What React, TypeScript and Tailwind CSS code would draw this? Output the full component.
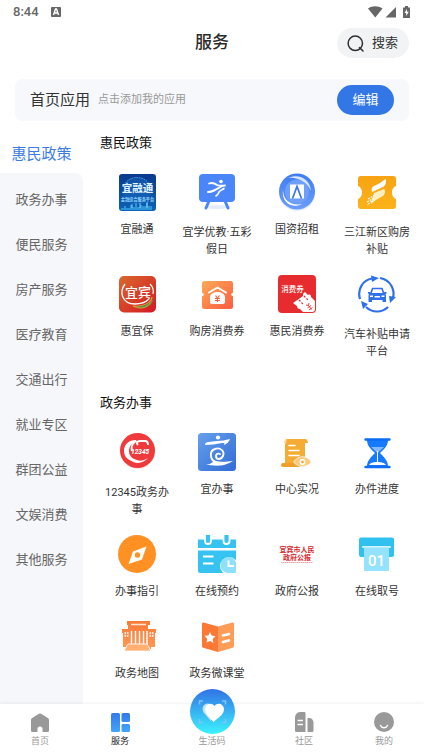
import { ReactNode, useId, useState } from 'react';
import clsx from 'clsx';

type Service = {
  name: string;
  icon: ReactNode;
  twoLines?: boolean;
};

type Section = {
  title: string;
  services: Service[];
};

type SvgProps = {
  children: ReactNode;
};

const Svg = ({ children }: SvgProps) => (
  <svg viewBox="0 0 38 38" className="w-[38px] h-[38px]" aria-hidden="true">
    {children}
  </svg>
);

type GradientProps = {
  id: string;
  from: string;
  to: string;
  diagonal?: boolean;
};

const Gradient = ({ id, from, to, diagonal }: GradientProps) => (
  <linearGradient id={id} x1="0" y1="0" x2={diagonal ? '1' : '0'} y2="1">
    <stop offset="0" stopColor={from} />
    <stop offset="1" stopColor={to} />
  </linearGradient>
);

const FinanceIcon = () => {
  const id = useId();
  return (
    <Svg>
      <Gradient id={id} from="#0a3a8c" to="#0b63b8" />
      <rect x="1" y="1" width="37" height="37" rx="3" fill={`url(#${id})`} />
      <circle cx="19" cy="18" r="14" fill="#1d6ac4" opacity=".45" />
      <path d="M6 12A15 15 0 0 1 32 12" fill="none" stroke="#5cb5ee" strokeWidth=".8" strokeDasharray="1.5 1" />
      <path d="M3 37v-2h3v-2h2v2h4v-3h2v2h3v-4h2v4h3v-2h2v1h4v-4h2v4h4v4z" fill="#3aa5e4" opacity=".75" />
      <path d="M14 35v-4M22 35v-5M29 35v-5" stroke="#9fe2ff" strokeWidth=".8" />
      <text x="19.5" y="19" textAnchor="middle" fontSize="10.5" fontWeight="700" fill="#e2f6ff">宜融通</text>
      <text x="19.5" y="27.5" textAnchor="middle" fontSize="4.2" fontWeight="700" fill="#8fd3fb">金融综合服务平台</text>
    </Svg>
  );
};

const BoardIcon = () => (
  <Svg>
    <ellipse cx="19" cy="34" rx="11" ry="2" fill="#e4edff" />
    <path d="M11 28 8 35M27 28l3 7" stroke="#4d87f5" strokeWidth="3" strokeLinecap="round" />
    <rect x="1" y="1" width="36" height="28" rx="4" fill="#4a86fa" />
    <circle cx="23" cy="8.5" r="1.8" fill="#fff" />
    <g fill="none" stroke="#fff" strokeLinecap="round" strokeLinejoin="round">
      <path d="M11 10.500c4-1.500 6 0 8 1.500 2 1 4 1 8 .5" strokeWidth="1.8" />
      <path d="M24 13c-3 2-5 3-8 4.500-2 1-4 1.500-6 1.500" strokeWidth="2" />
      <path d="M26 15.500c-2 1.500-4 2-5 3.500-.5 1.500-1 2.500-3 4" strokeWidth="1.6" />
    </g>
  </Svg>
);

const LeaseIcon = () => {
  const id = useId();
  return (
    <Svg>
      <Gradient id={id} from="#3f7cf3" to="#6b9dfb" />
      <circle cx="19" cy="20" r="18" fill="#e7effd" />
      <circle cx="19" cy="18.5" r="18" fill={`url(#${id})`} />
      <circle cx="19" cy="18.5" r="12" fill="#6fa0f8" />
      <path d="M10 5C21 0 32 6 33 18 29 9 20 4 10 5z" fill="#d5e5ff" />
      <path d="M5 17c0 11 9 16 19 14-9 5-21-1-19-14z" fill="#fff" />
      <rect x="12" y="11.5" width="14" height="14" fill="#fff" />
      <path d="M14.500 25.500 19 13.500 23.500 25.500" fill="none" stroke="#3977ee" strokeWidth="1.7" />
    </Svg>
  );
};

const SubsidyIcon = () => {
  const id = useId();
  return (
    <Svg>
      <Gradient id={id} from="#f7a313" to="#fbb31a" />
      <path
        d="M3 3h32a3 3 0 0 1 3 3v7c-3 1-4 4-4 6.500s1 5.500 4 6.500v7a3 3 0 0 1-3 3H3a3 3 0 0 1-3-3v-7c3-1 4-4 4-6.500S3 14 0 13V6a3 3 0 0 1 3-3z"
        fill={`url(#${id})`}
      />
      <path d="M28 6c0 4 0 6-3 8l-11 5c-1-3 0-5 2-6l6-3c2-1 3-3 6-4z" fill="#fff" />
      <path d="m16 20 10-4c2 2 1 5-1 7l-7 4c-2 1-3 3-5 4z" fill="#fff0c4" />
      <path d="m17 22-7 4m6-1-7 4m5-1-5 4" stroke="#fff" strokeWidth="1.2" strokeDasharray="2 1" />
    </Svg>
  );
};

const InsuranceIcon = () => {
  const id = useId();
  return (
    <Svg>
      <Gradient id={id} from="#d8692c" to="#d51824" diagonal />
      <rect x="1" y="1" width="37" height="36.5" rx="5" fill={`url(#${id})`} />
      <path d="M17 32c10 2 18-3 19-12 0 9-7 16-19 12z" fill="#6c9a3f" />
      <path d="M15 31c10 1 18-3 19-9-1 9-9 14-19 9z" fill="#519248" stroke="#f2a33a" strokeWidth=".8" />
      <path d="M7 9C1 17 4 29 17 29c6 0 11-2 14-5" fill="none" stroke="#fff" strokeWidth="1.3" />
      <path d="M32 9c3 3 4 6 3 10" fill="none" stroke="#fff" strokeWidth="1.2" />
      <text x="20" y="22" textAnchor="middle" fontSize="13" fontWeight="500" fill="#fff">宜宾</text>
    </Svg>
  );
};

const HouseVoucherIcon = () => {
  const id = useId();
  return (
    <Svg>
      <Gradient id={id} from="#fdab55" to="#fb5a40" diagonal />
      <rect x="4" y="6" width="31" height="28" rx="2.5" fill={`url(#${id})`} />
      <circle cx="4" cy="19.5" r="1.7" fill="#fff" />
      <circle cx="35" cy="19.5" r="1.7" fill="#fff" />
      <path d="m11 17.500 8.500-5 8.500 5" fill="none" stroke="#fff" strokeWidth="2" strokeLinecap="round" strokeLinejoin="round" />
      <path d="M12 27v-5c0-3 4-5 7.500-5s7.500 2 7.500 5v5a2 2 0 0 1-2 2H14a2 2 0 0 1-2-2z" fill="#fff" />
      <path d="m17.500 20.500 2 2.500 2-2.500M19.500 23v4M17 23.500h5M17 25.500h5" fill="none" stroke="#f4623f" strokeWidth="1.2" />
    </Svg>
  );
};

const CouponIcon = () => (
  <Svg>
    <rect width="38" height="38" rx="4" fill="#e62c2e" />
    <text x="14.5" y="16.5" textAnchor="middle" fontSize="7.5" fontWeight="500" fill="#fff">消费券</text>
    <path
      d="m15 28 10-7c0-2 0-3 2-4l3 3c2-1 3 0 3 2l4 4v8a3 3 0 0 1-3 3h-9l-3-3c-2 0-3-1-3-3z"
      fill="#fff"
    />
    <path d="m21 25 4 4M26 21l4 4" stroke="#e62c2e" strokeWidth="1.3" strokeDasharray="2 1.5" />
    <path d="m28 30 2.500.5.5-2.500M30.500 30.500l3 4M29.500 33l3.500-2.500M31 35l3.500-2.500" fill="none" stroke="#e62c2e" strokeWidth=".9" />
  </Svg>
);

const CarIcon = () => (
  <Svg>
    <g fill="none" stroke="#2f6fea" strokeWidth="2.2">
      <path d="M2 24C-1 14 5 5 14 3.500" />
      <path d="M22 3c11 2 15 12 13 20" />
      <path d="M30 32c-6 6-16 6-22 0" />
    </g>
    <path d="m13 .5 8 2.500-7 4zM38 22l-6 6-1-7zM3 26l7 3-5 5z" fill="#2f6fea" />
    <path
      d="M13 18 14.500 13.500h9.500L25.500 18"
      fill="none"
      stroke="#2f6fea"
      strokeWidth="1.6"
      strokeLinejoin="round"
    />
    <path d="M10 17h2l1 1h12.500l1-1h2v1.500l-1 .5.5 1.500V27H24.500v-2H14v2h-3.500v-6.500L11 19l-1-.5z" fill="#2f6fea" />
    <path d="M12 20.500h3v1.500h-3zM23.500 20.500h3v1.500h-3zM16.500 21h5.500v1.500h-5.500z" fill="#fff" />
  </Svg>
);

const HotlineIcon = () => (
  <Svg>
    <circle cx="19.5" cy="18.5" r="17.5" fill="#fde3e3" />
    <circle cx="19.5" cy="17.5" r="17.5" fill="#ee393d" />
    <path d="M18 7C9 7 6 13 6 18c0 8 8 12 17 10-7-1-12-4-12-10 0-5 3-8 8-9z" fill="#fff" />
    <path d="M12 27c6 5 14 3 18-2-4 3-11 4-18 2z" fill="#fff" />
    <path d="M17 9c-3 2-4 6-3 9M20 12c-2-2-1-4 2-4h5c2 0 3 1 3 4" fill="none" stroke="#fff" strokeWidth="2" />
    <text x="13" y="20.5" fontSize="6.5" fontWeight="800" fontStyle="italic" fill="#fff">12345</text>
  </Svg>
);

const YibanshiIcon = () => {
  const id = useId();
  return (
    <Svg>
      <Gradient id={id} from="#65a0ec" to="#326bd7" diagonal />
      <rect width="38" height="38" rx="3.5" fill={`url(#${id})`} />
      <circle cx="20" cy="4.5" r="2.1" fill="#fff" />
      <path d="M7 12c0-4 6-3 12-4 5 0 8-1 13-2-1 3-3 5-6 6 1-2 0-2-2-2-6 1-11 2-17 2z" fill="#fff" />
      <path d="M17 29c-5-3-6-11 0-13 5-2 10 2 8 7-2 4-7 4-7 0 0-2 2-3 4-2" fill="none" stroke="#fff" strokeWidth="1.9" strokeLinecap="round" />
      <path d="M16 27c-1 3-4 4-8 5 8 0 16 3 27-4-8 1-13 1-17 0z" fill="#fff" />
    </Svg>
  );
};

const LiveIcon = () => (
  <Svg>
    <path d="M9 6h18c2 0 3 2 3 4h-3v20H7V11c0-3 0-5 2-5z" fill="#f4ac35" />
    <path d="M5 30h17v4H5a2 2 0 0 1 0-4z" fill="#f0a02a" />
    <path d="M6 10c0-2 1-4 3-4l-1 5z" fill="#fcd58e" />
    <path d="M11 12.500h6M11 17.500h10M11 22.500h10" stroke="#fff" strokeWidth="1.6" strokeLinecap="round" />
    <path d="M15.500 29c5-7 13-7 18 0-5 6-13 6-18 0z" fill="#fbc97b" stroke="#fff" strokeWidth=".8" />
    <circle cx="24.5" cy="29" r="3" fill="#fff" />
    <circle cx="24.5" cy="29" r="1.4" fill="#f4ac35" />
  </Svg>
);

const HourglassIcon = () => (
  <Svg>
    <path d="M9 7h21c0 6-4 9-8 13 4 4 8 8 8 13H9c0-5 4-9 8-13-4-4-8-7-8-13z" fill="#1779fb" />
    <path d="M7.500 6.500h24M7.500 34h24" stroke="#0d6ef5" strokeWidth="2.4" strokeLinecap="round" />
    <path d="M13 14h13l-6.500 6z" fill="#85b9ff" />
    <path d="M19.500 18v12" stroke="#fff" strokeWidth="1" />
    <path d="M11 32c2-3 6-3 8.500-3s6 0 8.500 3z" fill="#fff" />
  </Svg>
);

const CompassIcon = () => (
  <Svg>
    <circle cx="19" cy="19" r="19" fill="#ff9124" />
    <path d="M28.500 11.500 24 24.500l-13.500 4.500L15 16.500z" fill="#fff" />
    <circle cx="19.5" cy="20" r="2.7" fill="#ff9124" />
  </Svg>
);

const AppointmentIcon = () => (
  <Svg>
    <path d="M0 4.500h38V13H0zM0 15.500h38V36a2 2 0 0 1-2 2H2a2 2 0 0 1-2-2z" fill="#37c3f2" />
    <path d="M7 0v6a3 3 0 0 0 6 0V0M25.500 0v6a3 3 0 0 0 6 0V0" fill="#37c3f2" stroke="#fff" strokeWidth="1.8" />
    <path d="M5 21.500h10.500M5 28.500h10.500" stroke="#fff" strokeWidth="2" />
    <circle cx="31" cy="31" r="9" fill="#fff" />
    <path d="M38 27.500V38h-9a8 8 0 1 1 9-10.500z" fill="#8fe0fc" />
    <path d="M30.500 25.500V31h5.500" fill="none" stroke="#fff" strokeWidth="2" />
  </Svg>
);

const GazetteIcon = () => (
  <Svg>
    <text x="19" y="17" textAnchor="middle" fontSize="7" fontWeight="700" fill="#d62a2e">宜宾市人民</text>
    <text x="19" y="25" textAnchor="middle" fontSize="7" fontWeight="700" fill="#d62a2e">政府公报</text>
    <path d="M3 27.500h32" stroke="#e98a8c" strokeWidth=".8" strokeDasharray="1.5 .5" />
  </Svg>
);

const TicketNumberIcon = () => (
  <Svg>
    <path d="M3 2.500h31a2 2 0 0 1 2 2V20a2 2 0 0 1-2 2H3a2 2 0 0 1-2-2V4.500a2 2 0 0 1 2-2z" fill="#30c1f0" />
    <path d="M5 12h27" stroke="#d5f4ff" strokeWidth="2" strokeLinecap="round" />
    <path d="M6 12.500h25V35a1 1 0 0 1-1 1H7a1 1 0 0 1-1-1z" fill="#94e2fc" />
    <text x="18.5" y="30.5" textAnchor="middle" fontSize="15" fontWeight="500" fill="#fff">01</text>
  </Svg>
);

const HallIcon = () => {
  const id = useId();
  return (
    <Svg>
      <Gradient id={id} from="#f77a37" to="#ff9a55" />
      <path d="M9 4h23v4h-2v4h8v4h-1v14h-4v2H8v-2H5V16H4v-4h6V8H9z" fill={`url(#${id})`} />
      <path d="M13 7.500h15" stroke="#ffe6d5" strokeWidth="1.5" />
      <path d="M13.500 14v14M17.500 14v14M21.500 14v14M25.500 14v14M29 14v14" stroke="#fff" strokeWidth="1.4" />
      <path d="M6.500 15h4v5h-4zM31.500 15h4v5h-4z" fill="#ffe6d5" />
      <path d="M8.500 15v5M6.500 17.500h4M33.500 15v5M31.500 17.500h4" stroke="#f9823f" strokeWidth=".8" />
      <path d="m10 27-4 7h27l-4-7z" fill="#ffaf70" stroke="#fff" strokeWidth=".8" />
    </Svg>
  );
};

const LectureIcon = () => (
  <Svg>
    <path d="M5.500 5.500 20 9.500V35L6 31a2 2 0 0 1-2-2V7c0-1 .5-1.500 1.500-1.500z" fill="#fb7935" />
    <path d="M34.500 5.500 20 9.500V35l14-4a2 2 0 0 0 2-2V7c0-1-.5-1.500-1.500-1.500z" fill="#ff9c57" />
    <path d="m12 15 1.700 3.600 3.800.700-2.800 2.800.700 4-3.400-2-3.500 1.500.700-3.900-2.700-3 3.800-.3z" fill="#fff" />
    <path d="m25 18.500 6-1.500M25 25l6-1.500" stroke="#fff" strokeWidth="2.6" strokeLinecap="round" />
  </Svg>
);

const categories = [
  '惠民政策',
  '政务办事',
  '便民服务',
  '房产服务',
  '医疗教育',
  '交通出行',
  '就业专区',
  '群团公益',
  '文娱消费',
  '其他服务',
];

const sections: Section[] = [
  {
    title: '惠民政策',
    services: [
      { name: '宜融通', icon: <FinanceIcon /> },
      { name: '宜学优教·五彩假日', icon: <BoardIcon />, twoLines: true },
      { name: '国资招租', icon: <LeaseIcon /> },
      { name: '三江新区购房补贴', icon: <SubsidyIcon />, twoLines: true },
      { name: '惠宜保', icon: <InsuranceIcon /> },
      { name: '购房消费券', icon: <HouseVoucherIcon /> },
      { name: '惠民消费券', icon: <CouponIcon /> },
      { name: '汽车补贴申请平台', icon: <CarIcon />, twoLines: true },
    ],
  },
  {
    title: '政务办事',
    services: [
      { name: '12345政务办事', icon: <HotlineIcon />, twoLines: true },
      { name: '宜办事', icon: <YibanshiIcon /> },
      { name: '中心实况', icon: <LiveIcon /> },
      { name: '办件进度', icon: <HourglassIcon /> },
      { name: '办事指引', icon: <CompassIcon /> },
      { name: '在线预约', icon: <AppointmentIcon /> },
      { name: '政府公报', icon: <GazetteIcon /> },
      { name: '在线取号', icon: <TicketNumberIcon /> },
      { name: '政务地图', icon: <HallIcon /> },
      { name: '政务微课堂', icon: <LectureIcon /> },
    ],
  },
];

const StatusBar = () => (
  <div className="flex items-center justify-between h-6 pl-[13px] pr-[14px] text-[#666]">
    <div className="flex items-center gap-3">
      <span className="text-[13px] font-medium">8:44</span>
      <svg viewBox="0 0 10 10" className="w-[10px] h-[10px]" aria-hidden="true">
        <rect width="10" height="10" rx="1" fill="#666" />
        <path d="M2.500 8 4.500 2h1l2 6M3.500 6h3" fill="none" stroke="#fff" strokeWidth="1.4" />
      </svg>
    </div>
    <svg viewBox="0 0 42 12" className="w-[42px] h-3" fill="#666" aria-hidden="true">
      <path d="M0 2.500C4-.5 10-.5 14.500 2.500L7.300 11.500z" />
      <path d="M28 1v10.500H17.500z" />
      <path d="M35 1.500h2V0h3v1.500h2V12h-7z" />
      <path d="M39 3l-2.500 4h1.700v3l2.600-4.200H39z" fill="#fff" />
    </svg>
  </div>
);

const Header = () => (
  <header className="grid grid-cols-[1fr_auto_1fr] items-center h-[38px] px-[15px]">
    <h1 className="col-start-2 text-[17px] font-medium text-[#2b2b2b]">服务</h1>
    <button className="justify-self-end flex items-center gap-2 h-[30px] pl-[10px] pr-[11px] rounded-full bg-[#f2f3f5] text-[13px] text-[#333]">
      <svg viewBox="0 0 17 17" className="w-[17px] h-[17px]" fill="none" stroke="#2d2f33" strokeWidth="1.5" aria-hidden="true">
        <circle cx="8.3" cy="8.3" r="7.2" />
        <path d="m12.500 12.500 3.500 3.500" strokeLinecap="round" />
      </svg>
      搜索
    </button>
  </header>
);

type SidebarProps = {
  active: string;
  onSelect: (name: string) => void;
};

const Sidebar = ({ active, onSelect }: SidebarProps) => (
  <nav className="flex flex-col w-[83px] shrink-0">
    <button
      onClick={() => onSelect(categories[0])}
      className={clsx(
        'h-10 pt-0.5',
        active === categories[0] ? 'text-[15px] text-[#3c7be4]' : 'text-[13px] text-[#666]'
      )}
    >
      {categories[0]}
    </button>
    <div className="flex flex-col flex-1 pt-1 rounded-tr-lg bg-[#f6f7fa]">
      {categories.slice(1).map((name) => (
        <button
          key={name}
          onClick={() => onSelect(name)}
          className={clsx(
            'h-[45px]',
            active === name ? 'text-[15px] text-[#3c7be4]' : 'text-[13px] text-[#666]'
          )}
        >
          {name}
        </button>
      ))}
    </div>
  </nav>
);

const ServiceSection = ({ title, services }: Section) => (
  <section>
    <h2 className="mb-5 pl-[3px] text-[13px] leading-5 text-[#111]">{title}</h2>
    <div className="grid grid-cols-4 gap-y-[17px]">
      {services.map((service) => (
        <a key={service.name} href="#" className="flex flex-col items-center px-1">
          {service.icon}
          <span
            className={clsx(
              'text-center text-[11px] leading-[17px] text-[#333]',
              service.twoLines ? 'mt-[13px]' : 'mt-[10px]'
            )}
          >
            {service.name}
          </span>
        </a>
      ))}
    </div>
  </section>
);

const TabBar = () => {
  const servicesId = useId();
  const codeId = useId();
  return (
    <nav className="flex pt-2 pb-[5px] bg-white text-[9px] leading-[13px] text-[#999] shadow-[0_-1px_3px_rgba(0,0,0,0.06)]">
      <a href="#" className="flex flex-col flex-1 items-center gap-[3px]">
        <svg viewBox="0 0 20 20" className="w-5 h-5" aria-hidden="true">
          <path d="M10 1.500c.6 0 1 .2 1.500.5l6 3.700c.9.600 1.500 1.300 1.500 2.300v10.500a1.500 1.500 0 0 1-1.500 1.500H12.500v-3a2.500 2.500 0 0 0-5 0v3h-5A1.500 1.500 0 0 1 1 18.500V8c0-1 .6-1.700 1.500-2.300l6-3.700c.5-.3.900-.5 1.500-.5z" fill="#999" />
        </svg>
        首页
      </a>
      <a href="#" aria-current="page" className="flex flex-col flex-1 items-center gap-[3px] text-[#222]">
        <svg viewBox="0 0 20 20" className="w-5 h-5" aria-hidden="true">
          <linearGradient id={servicesId} gradientUnits="userSpaceOnUse" x1="0" y1="1" x2="0" y2="20">
            <stop offset="0" stopColor="#3478e8" />
            <stop offset="1" stopColor="#42a5fb" />
          </linearGradient>
          <g fill={`url(#${servicesId})`}>
            <rect x="1" y="1" width="9" height="19" rx="1.5" />
            <rect x="11.5" y="1" width="8.5" height="9" rx="1.5" />
            <rect x="11.5" y="12" width="8.5" height="8" rx="1.5" />
          </g>
        </svg>
        服务
      </a>
      <a href="#" className="flex flex-col items-center gap-px w-[104px]">
        <svg viewBox="0 0 45 45" className="w-[45px] h-[45px] -mt-[23px]" aria-hidden="true">
          <Gradient id={codeId} from="#3272e6" to="#3cf3fe" />
          <circle cx="22.5" cy="22.5" r="22.5" fill={`url(#${codeId})`} />
          <path d="M9.500 15.500v-3.500H13M32 12h3.500v3.500M9.500 30v3.500H13M32 33.500h3.500V30" fill="none" stroke="#7fc4f8" strokeWidth="1.6" />
          <path d="M21 32 14 24c-3-4-1-9 3-9.500 2 0 4 1 5 3z" fill="#bfe2fd" />
          <path d="M23.500 33 18 27c-2-3-3-5-3-7 1-5 6-7 9.500-3 3-4 9-2 9.500 3 0 3-1.500 5-3 6.500z" fill="#fff" />
        </svg>
        生活码
      </a>
      <a href="#" className="flex flex-col flex-1 items-center gap-[3px]">
        <svg viewBox="0 0 20 20" className="w-5 h-5" aria-hidden="true">
          <path d="M6 0h4.500a1 1 0 0 1 1 1v19h-9A1.500 1.500 0 0 1 1 18.500V6c0-3 2-6 5-6zM13.500 6H15c3 0 4.500 2 4.500 5v7.500a1.500 1.500 0 0 1-1.500 1.500h-4.500z" fill="#999" />
          <path d="M3.500 8.500H9M3.500 12.500H9" stroke="#fff" strokeWidth="1.5" />
        </svg>
        社区
      </a>
      <a href="#" className="flex flex-col flex-1 items-center gap-[3px]">
        <svg viewBox="0 0 20 20" className="w-5 h-5" aria-hidden="true">
          <circle cx="10" cy="10" r="10" fill="#999" />
          <path d="M6.500 13.500c1.500 3 5.500 3 7 0" fill="none" stroke="#fff" strokeWidth="1.5" strokeLinecap="round" />
        </svg>
        我的
      </a>
    </nav>
  );
};

const App = () => {
  const [active, setActive] = useState(categories[0]);

  return (
    <div className="flex flex-col min-h-screen bg-white font-[Roboto,'Noto_Sans_CJK_SC',sans-serif]">
      <StatusBar />
      <Header />

      <div className="flex items-center h-[42px] mx-[15px] mt-[17px] px-[15px] rounded-lg bg-[#f6f8fb]">
        <span className="text-[15px] text-[#333]">首页应用</span>
        <span className="ml-2 text-[11px] text-[#999]">点击添加我的应用</span>
        <button className="ml-auto w-[57px] h-[30px] rounded-full bg-[#3376e6] text-[13px] text-white">
          编辑
        </button>
      </div>

      <main className="flex flex-1 pt-3">
        <Sidebar active={active} onSelect={setActive} />
        <div className="flex flex-col flex-1 gap-[33px] pl-[14px] pr-[7px]">
          {sections.map((section) => (
            <ServiceSection key={section.title} {...section} />
          ))}
        </div>
      </main>

      <TabBar />
    </div>
  );
};

export default App;
